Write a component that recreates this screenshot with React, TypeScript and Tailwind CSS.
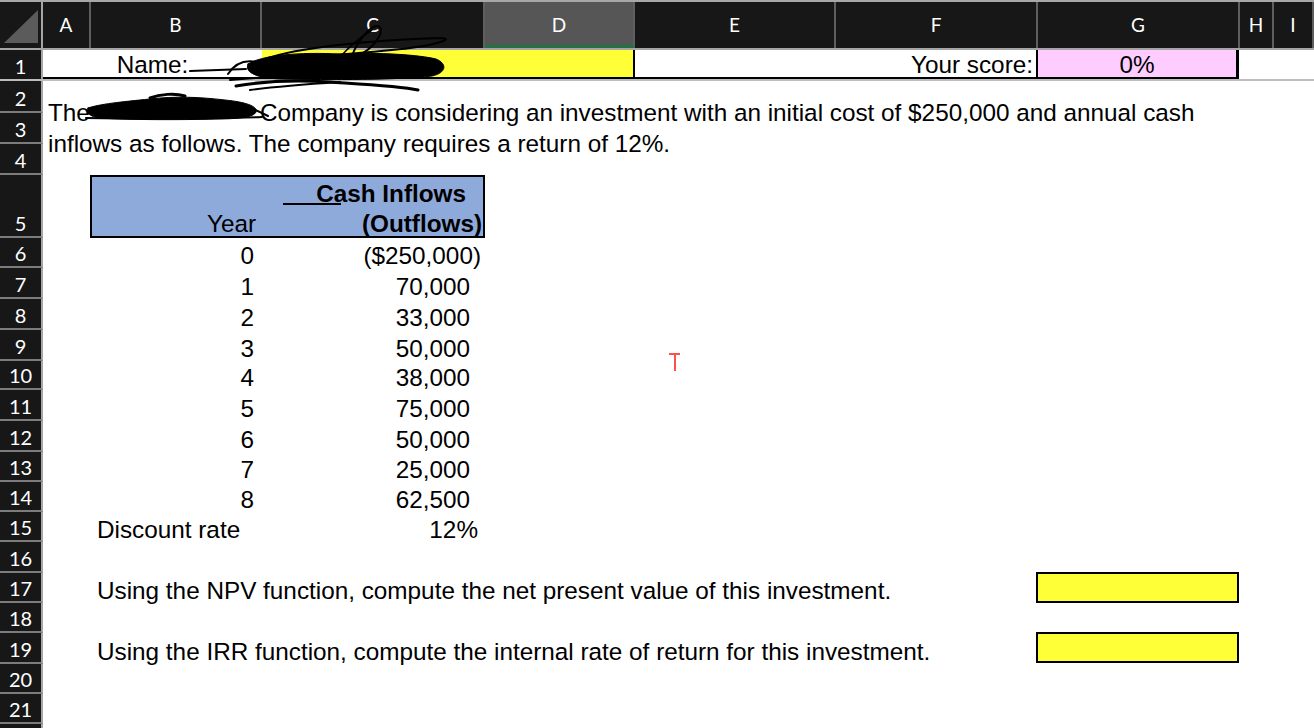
import React from "react";

type R = { n: number; h: number };

const HEAD_FONT = { fontFamily: "Lato, 'Open Sans', sans-serif" };

function RowHead({ n, h }: R) {
  return (
    <div
      className="w-[43px] shrink-0 bg-[#171717] border-r-2 border-r-[#a7a7a7] border-b-2 border-b-[#7c7c7c] flex items-end justify-center text-white text-[20px] leading-[20px] pb-[3px]"
      style={{ height: h, ...HEAD_FONT }}
    >
      {n > 0 ? n : ""}
    </div>
  );
}

function Block({ rows, children }: { rows: R[]; children?: React.ReactNode }) {
  const total = rows.reduce((s, r) => s + r.h, 0);
  return (
    <div className="flex w-full" style={{ height: total }}>
      <div className="flex flex-col shrink-0">
        {rows.map((r, i) => (
          <RowHead key={i} n={r.n} h={r.h} />
        ))}
      </div>
      <div className="flex-1 min-w-0 h-full">{children}</div>
    </div>
  );
}

const data: [string, string, boolean][] = [
  ["0", "($250,000)", true],
  ["1", "70,000", false],
  ["2", "33,000", false],
  ["3", "50,000", false],
  ["4", "38,000", false],
  ["5", "75,000", false],
  ["6", "50,000", false],
  ["7", "25,000", false],
  ["8", "62,500", false],
];
const dataHeights = [30, 31, 31, 31, 29, 31, 31, 30, 30];

function ColHead({ label, w, selected }: { label: string; w?: number; selected?: boolean }) {
  return (
    <div
      className={
        "h-full flex items-center justify-center text-white text-[19px] border-r-2 border-r-[#5f5f5f] " +
        (selected ? "bg-[#565656] border-b-[3px] border-b-[#217346] pt-[3px] " : "") +
        (w ? "shrink-0" : "flex-1")
      }
      style={w ? { width: w } : undefined}
    >
      {label}
    </div>
  );
}

export default function App() {
  return (
    <div
      className="w-[1314px] h-[728px] overflow-hidden bg-white relative text-black"
      style={{ fontFamily: "'Liberation Sans', Arial, sans-serif" }}
    >
      <div className="h-[2px] bg-[#a8a8a8]" />
      {/* Column headers */}
      <div className="flex h-[48px] bg-[#171717] border-b-2 border-b-[#a5a5a5]" style={HEAD_FONT}>
        <div className="w-[43px] shrink-0 h-full border-r-2 border-r-[#a5a5a5]">
          <svg width="41" height="46" viewBox="0 0 41 46">
            <polygon points="4,41 38,41 38,8" fill="#5b5b5b" />
          </svg>
        </div>
        <ColHead label="A" w={48} />
        <ColHead label="B" w={171} />
        <ColHead label="C" w={223} />
        <ColHead label="D" w={150} selected />
        <ColHead label="E" w={201} />
        <ColHead label="F" w={202} />
        <ColHead label="G" w={202} />
        <ColHead label="H" w={34} />
        <ColHead label="I" />
      </div>

      {/* Row 1 */}
      <div className="flex h-[29px]">
        <div
          className="w-[43px] shrink-0 bg-[#171717] border-r-2 border-r-[#a7a7a7] flex items-end justify-center text-white text-[20px] leading-[20px] pb-[3px]"
          style={HEAD_FONT}
        >
          1
        </div>
        <div className="w-[219px] shrink-0 border-b-2 border-black flex items-end justify-center text-[24.3px] leading-[24px]">
          Name:
        </div>
        <div className="w-[373px] shrink-0 bg-[#ffff38] border-b-2 border-r-2 border-black" />
        <div className="w-[401px] shrink-0 border-b-2 border-black flex items-end justify-end pr-[3px] text-[24.3px] leading-[24px]">
          Your score:
        </div>
        <div className="w-[203px] shrink-0 bg-[#ffccff] border-b-2 border-l-2 border-r-[3px] border-black flex items-end justify-center text-[24.3px] leading-[24px]">
          0%
        </div>
        <div className="flex-1" />
      </div>
      <div className="h-[2px] bg-[#bdbdbd]" />

      {/* Rows 2-4 */}
      <Block rows={[{ n: 2, h: 32 }, { n: 3, h: 31 }, { n: 4, h: 31 }]}>
        <div className="h-full flex flex-col justify-center pl-[5px] text-[24.3px] leading-[31px] whitespace-nowrap">
          <div>
            The<span className="inline-block w-[170px]" />Company is considering an investment with an initial cost of $250,000 and annual cash
          </div>
          <div>inflows as follows. The company requires a return of 12%.</div>
        </div>
      </Block>

      {/* Row 5: table header */}
      <Block rows={[{ n: 5, h: 63 }]}>
        <div className="h-full flex">
          <div className="w-[47px] shrink-0" />
          <div className="w-[395px] shrink-0 h-full border-2 border-black bg-[#8eaadb] flex text-[24.3px] leading-[24px]">
            <div className="w-[170px] shrink-0 flex items-end justify-end pr-[6px]">Year</div>
            <div className="flex-1 flex flex-col items-end justify-end gap-[6px] font-bold">
              <div className="pr-[17px] relative">
                <span className="absolute left-[-33px] bottom-[1px] w-[58px] h-[2px] bg-black" />
                Cash Inflows
              </div>
              <div className="pr-[1px]">(Outflows)</div>
            </div>
          </div>
        </div>
      </Block>

      {/* Rows 6-14: data */}
      {data.map(([y, v, neg], i) => (
        <Block key={y} rows={[{ n: 6 + i, h: dataHeights[i] }]}>
          <div className="h-full flex text-[24.3px] leading-[24px]">
            <div className="w-[48px] shrink-0" />
            <div className="w-[171px] shrink-0 flex items-end justify-end pr-[8px]">{y}</div>
            <div className={"w-[223px] shrink-0 flex items-end justify-end " + (neg ? "pr-[4px]" : "pr-[15px]")}>
              {v}
            </div>
          </div>
        </Block>
      ))}

      {/* Row 15 */}
      <Block rows={[{ n: 15, h: 30 }]}>
        <div className="h-full flex text-[24.3px] leading-[24px]">
          <div className="w-[48px] shrink-0" />
          <div className="w-[171px] shrink-0 flex items-end pl-[6px] whitespace-nowrap">Discount rate</div>
          <div className="w-[223px] shrink-0 flex items-end justify-end pr-[7px]">12%</div>
        </div>
      </Block>

      <Block rows={[{ n: 16, h: 31 }]} />

      {/* Row 17 */}
      <Block rows={[{ n: 17, h: 30 }]}>
        <div className="h-full flex text-[24.3px] leading-[24px]">
          <div className="w-[48px] shrink-0" />
          <div className="w-[945px] shrink-0 flex items-end pl-[6px] whitespace-nowrap">
            Using the NPV function, compute the net present value of this investment.
          </div>
          <div className="w-[203px] shrink-0 h-[31px] -mt-[1px] border-2 border-black bg-[#ffff38]" />
        </div>
      </Block>

      <Block rows={[{ n: 18, h: 30 }]} />

      {/* Row 19 */}
      <Block rows={[{ n: 19, h: 31 }]}>
        <div className="h-full flex text-[24.3px] leading-[24px]">
          <div className="w-[48px] shrink-0" />
          <div className="w-[945px] shrink-0 flex items-end pl-[6px] whitespace-nowrap">
            Using the IRR function, compute the internal rate of return for this investment.
          </div>
          <div className="w-[203px] shrink-0 h-[31px] -mt-[1px] border-2 border-black bg-[#ffff38]" />
        </div>
      </Block>

      <Block rows={[{ n: 20, h: 30 }]} />
      <Block rows={[{ n: 21, h: 30 }]} />
      <Block rows={[{ n: 0, h: 30 }]} />

      {/* Overlay: redaction scribbles and cursor */}
      <svg
        className="absolute inset-0 pointer-events-none"
        width="1314"
        height="728"
        viewBox="0 0 1314 728"
      >
        <g stroke="#000" fill="none" strokeLinecap="round" strokeLinejoin="round">
          <path d="M190,71 L246,69" strokeWidth="2" />
          <path
            d="M248,64 C262,55 300,52 340,54 C380,52 420,55 436,59 C448,64 446,73 432,76 C400,80 330,80 280,79 C258,78 244,73 248,64 Z"
            fill="#000"
          />
          <path d="M262,60 C300,46 380,40 440,38 C455,38 440,44 410,48 C380,52 330,55 300,58" strokeWidth="2" />
          <path d="M352,56 C356,44 368,28 376,26 C384,25 382,36 372,46 C366,52 358,56 352,58" strokeWidth="2" />
          <path d="M340,57 C350,46 362,36 372,30" strokeWidth="1.5" />
          <path d="M236,86 C270,80 300,80 330,82 C360,84 400,86 418,90" strokeWidth="3" />
          <path d="M230,80 C250,78 270,77 300,76" strokeWidth="2" />
          <path d="M250,90 C280,86 310,84 340,82" strokeWidth="2" />
          <path d="M228,74 C236,62 246,60 256,62" strokeWidth="2" />

          <path
            d="M88,108 C100,104 120,102 150,99 C175,96 200,97 225,100 C245,102 258,106 256,112 C254,117 240,119 215,119 C180,120 130,120 100,118 C90,117 85,112 88,108 Z"
            fill="#000"
          />
          <path d="M86,118 C130,119 200,119 262,117" strokeWidth="2" />
          <path d="M150,98 C160,94 175,93 185,96" strokeWidth="3" />
          <path d="M240,104 C252,108 260,112 268,116" strokeWidth="2" />
        </g>
        <rect x="669" y="353" width="11" height="2" fill="#ff5050" />
        <rect x="674" y="353" width="2" height="18" fill="#ff5050" />
      </svg>
    </div>
  );
}
